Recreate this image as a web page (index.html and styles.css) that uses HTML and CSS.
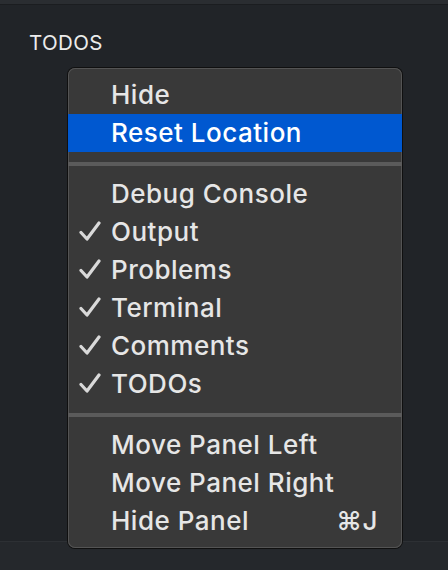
FILE: index.html
```html
<!DOCTYPE html>
<html>
<head>
<meta charset="utf-8">
<link rel="stylesheet" href="styles.css">
</head>
<body>
<div class="app">
  <div class="topstrip"></div>
  <div class="panel">
    <div class="panel-title">TODOS</div>
  </div>
  <div class="statusbar"></div>
</div>
<div class="menu">
  <div class="item"><span class="check"></span><span class="label">Hide</span></div>
  <div class="item active"><span class="check"></span><span class="label">Reset Location</span></div>
  <div class="sep"></div>
  <div class="item"><span class="check"></span><span class="label">Debug Console</span></div>
  <div class="item"><span class="check"><svg viewBox="0 0 22 20" width="22" height="20"><path d="M2 11.5 L8 18 L20 2" fill="none" stroke="#d9d9d9" stroke-width="3.2" stroke-linecap="round" stroke-linejoin="round"/></svg></span><span class="label">Output</span></div>
  <div class="item"><span class="check"><svg viewBox="0 0 22 20" width="22" height="20"><path d="M2 11.5 L8 18 L20 2" fill="none" stroke="#d9d9d9" stroke-width="3.2" stroke-linecap="round" stroke-linejoin="round"/></svg></span><span class="label">Problems</span></div>
  <div class="item"><span class="check"><svg viewBox="0 0 22 20" width="22" height="20"><path d="M2 11.5 L8 18 L20 2" fill="none" stroke="#d9d9d9" stroke-width="3.2" stroke-linecap="round" stroke-linejoin="round"/></svg></span><span class="label">Terminal</span></div>
  <div class="item"><span class="check"><svg viewBox="0 0 22 20" width="22" height="20"><path d="M2 11.5 L8 18 L20 2" fill="none" stroke="#d9d9d9" stroke-width="3.2" stroke-linecap="round" stroke-linejoin="round"/></svg></span><span class="label">Comments</span></div>
  <div class="item"><span class="check"><svg viewBox="0 0 22 20" width="22" height="20"><path d="M2 11.5 L8 18 L20 2" fill="none" stroke="#d9d9d9" stroke-width="3.2" stroke-linecap="round" stroke-linejoin="round"/></svg></span><span class="label">TODOs</span></div>
  <div class="sep"></div>
  <div class="item"><span class="check"></span><span class="label">Move Panel Left</span></div>
  <div class="item"><span class="check"></span><span class="label">Move Panel Right</span></div>
  <div class="item"><span class="check"></span><span class="label">Hide Panel</span><span class="shortcut">⌘J</span></div>
</div>
</body>
</html>
```
FILE: styles.css
```css
html, body {
  margin: 0;
  padding: 0;
  background: #212428;
  width: 448px;
  height: 570px;
  overflow: hidden;
  font-family: Inter, "Noto Sans", "DejaVu Sans", sans-serif;
}
.app {
  display: flex;
  flex-direction: column;
  height: 570px;
}
.topstrip {
  height: 4px;
  background: #2a2d31;
  border-bottom: 1px solid #1b1d20;
}
.panel {
  flex: 1;
  padding: 28px 0 0 29px;
}
.panel-title {
  color: #ececec;
  font-size: 20.5px;
  letter-spacing: 0.4px;
  line-height: 20px;
}
.statusbar {
  height: 28px;
  background: #25282c;
  border-top: 1px solid #2d3034;
}
.menu {
  position: absolute;
  left: 68px;
  top: 68px;
  width: 334px;
  box-sizing: border-box;
  padding: 8px 0;
  background: #393939;
  border-radius: 7px;
  box-shadow: 0 0 0 1px #101010, inset 0 0 0 1px #545454;
  overflow: hidden;
}
.item {
  display: flex;
  align-items: center;
  height: 38px;
  box-sizing: border-box;
  padding-bottom: 2px;
  color: #e6e6e6;
  font-size: 26px;
  font-weight: 500;
  letter-spacing: 0.5px;
  padding-right: 24px;
}
.item.active {
  background: #0058d0;
  color: #ffffff;
}
.check {
  width: 43px;
  flex: none;
  display: flex;
  justify-content: flex-end;
  box-sizing: border-box;
}
.check svg {
  display: block;
  margin-right: 10px;
}
.label {
  flex: 1;
  white-space: nowrap;
}
.shortcut {
  white-space: nowrap;
}
.sep {
  height: 23px;
  display: flex;
  align-items: center;
}
.sep::before {
  content: "";
  display: block;
  width: 100%;
  height: 4px;
  background: #5b5b5b;
}
```
